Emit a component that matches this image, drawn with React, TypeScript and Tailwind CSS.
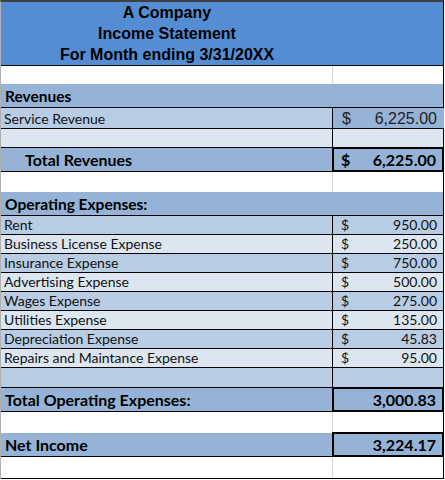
const LBL = "font-['Lato','Noto_Sans',sans-serif]";
const ARIAL = "font-['Liberation_Sans','Arial',sans-serif]";

type Line = {
  label: string;
  value?: string;
  dollar?: boolean;
  bg: string;
};

const expenses: Line[] = [
  { label: 'Rent', value: '950.00', dollar: true, bg: 'bg-[#b8cce4]' },
  { label: 'Business License Expense', value: '250.00', dollar: true, bg: 'bg-[#dce6f1]' },
  { label: 'Insurance Expense', value: '750.00', dollar: true, bg: 'bg-[#b8cce4]' },
  { label: 'Advertising Expense', value: '500.00', dollar: true, bg: 'bg-[#dce6f1]' },
  { label: 'Wages Expense', value: '275.00', dollar: true, bg: 'bg-[#b8cce4]' },
  { label: 'Utilities Expense', value: '135.00', dollar: true, bg: 'bg-[#dce6f1]' },
  { label: 'Depreciation Expense', value: '45.83', dollar: true, bg: 'bg-[#b8cce4]' },
  { label: 'Repairs and Maintance Expense', value: '95.00', dollar: true, bg: 'bg-[#dce6f1]' },
];

function BlankRow({ h }: { h: string }) {
  return (
    <div className={`grid grid-cols-[332px_111px] ${h} bg-white`}>
      <div className="border-r border-[#d4d4d4]" />
      <div />
    </div>
  );
}

function SectionRow({ label }: { label: string }) {
  return (
    <div className={`h-[24px] bg-[#95b3d7] border-b border-black flex items-end pl-[4px] pb-[1px] ${LBL} font-bold text-[15.5px] leading-[20px] text-black`}>
      {label}
    </div>
  );
}

function ItemRow({ item }: { item: Line }) {
  return (
    <div className={`grid grid-cols-[332px_111px] h-[19px] border-b border-black ${item.bg} ${LBL} text-[14px] leading-[18px] text-[#111]`}>
      <div className="border-r border-black pl-[3px] flex items-end">{item.label}</div>
      <div className="flex items-end justify-between pl-[8px] pr-[7px]">
        <span>{item.dollar ? '$' : ''}</span>
        <span>{item.value}</span>
      </div>
    </div>
  );
}

function TotalRow({ label, value, dollar, indent }: { label: string; value: string; dollar?: boolean; indent?: boolean }) {
  return (
    <div className={`grid grid-cols-[332px_111px] h-[24px] bg-[#95b3d7] ${LBL} font-bold text-[16px] leading-[20px] text-black`}>
      <div className={`border-b border-black flex items-end pb-[1px] ${indent ? 'pl-[24px]' : 'pl-[4px]'}`}>{label}</div>
      <div className="border-2 border-black -mt-px -ml-px h-[25px] flex items-end justify-between pl-[7px] pr-[6px]">
        <span>{dollar ? '$' : ''}</span>
        <span>{value}</span>
      </div>
    </div>
  );
}

export default function App() {
  return (
    <div className="w-[445px] h-[480px] bg-white overflow-hidden">
      <div className="w-[444px] border-t-2 border-[#3f3f3f] border-l border-l-[#b0b0b0] border-r border-r-black">
        {/* title block */}
        <div className={`h-[64px] bg-[#548dd4] border-b border-black ${ARIAL} font-bold text-[16px] leading-[21px] text-black`}>
          <div className="w-[332px] text-center">
            <div>A Company</div>
            <div>Income Statement</div>
            <div>For Month ending 3/31/20XX</div>
          </div>
        </div>

        <BlankRow h="h-[18px]" />
        <SectionRow label="Revenues" />

        <div className="grid grid-cols-[332px_111px] h-[21px] border-b border-black">
          <div className={`bg-[#b8cce4] border-r border-black pl-[3px] flex items-end ${LBL} text-[14px] leading-[18px] text-[#111]`}>
            Service Revenue
          </div>
          <div className={`bg-[#95b3d7] flex items-end justify-between pl-[9px] pr-[7px] ${ARIAL} text-[16px] leading-[19px] text-[#222]`}>
            <span>$</span>
            <span>6,225.00</span>
          </div>
        </div>

        <div className="grid grid-cols-[332px_111px] h-[19px] bg-[#dce6f1] border-b border-black">
          <div className="border-r border-black" />
          <div />
        </div>

        <TotalRow label="Total Revenues" value="6,225.00" dollar indent />

        <BlankRow h="h-[20px]" />
        <SectionRow label="Operating Expenses:" />

        {expenses.map((e) => (
          <ItemRow key={e.label} item={e} />
        ))}

        <div className="grid grid-cols-[332px_111px] h-[20px] bg-[#b8cce4] border-b border-black">
          <div className="border-r border-black" />
          <div />
        </div>

        <TotalRow label="Total Operating Expenses:" value="3,000.83" />

        <BlankRow h="h-[21px]" />

        <TotalRow label="Net Income" value="3,224.17" />

        <div className="grid grid-cols-[332px_111px] h-[22px] bg-white border-b border-black">
          <div className="border-r border-[#d4d4d4]" />
          <div />
        </div>
      </div>
    </div>
  );
}
